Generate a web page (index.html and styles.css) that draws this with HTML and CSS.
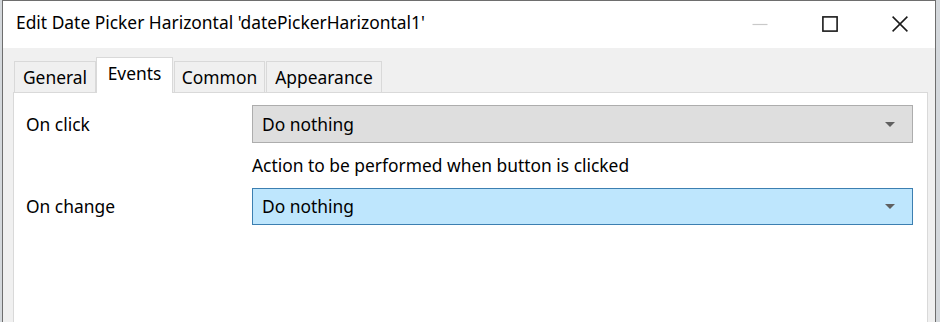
FILE: index.html
```html
<!DOCTYPE html>
<html>
<head>
<meta charset="utf-8">
<link rel="stylesheet" href="styles.css">
</head>
<body>
<div class="window">
  <div class="titlebar">
    <div class="title">Edit Date Picker Harizontal 'datePickerHarizontal1'</div>
    <div class="controls">
      <div class="ctl">
        <svg width="16" height="16" viewBox="0 0 16 16"><line x1="0.5" y1="8.5" x2="15.5" y2="8.5" stroke="#c9c9c9" stroke-width="1.2"/></svg>
      </div>
      <div class="ctl">
        <svg width="16" height="16" viewBox="0 0 16 16"><rect x="0.9" y="0.9" width="14.2" height="14.2" fill="none" stroke="#1a1a1a" stroke-width="1.6"/></svg>
      </div>
      <div class="ctl">
        <svg width="16" height="16" viewBox="0 0 16 16"><path d="M0.6 0.6 L15.4 15.4 M15.4 0.6 L0.6 15.4" stroke="#1a1a1a" stroke-width="1.5" fill="none"/></svg>
      </div>
    </div>
  </div>
  <div class="body">
    <div class="tabs">
      <div class="tab tab-general">General</div>
      <div class="tab tab-events active">Events</div>
      <div class="tab tab-common">Common</div>
      <div class="tab tab-appearance">Appearance</div>
    </div>
    <div class="panel">
      <div class="form">
        <div class="label">On click</div>
        <div class="combo">
          <span>Do nothing</span>
          <span class="arrow"></span>
        </div>
        <div></div>
        <div class="hint">Action to be performed when button is clicked</div>
        <div class="label">On change</div>
        <div class="combo focused">
          <span>Do nothing</span>
          <span class="arrow"></span>
        </div>
      </div>
    </div>
  </div>
</div>
</body>
</html>
```

FILE: styles.css
```css
html, body {
  margin: 0;
  padding: 0;
}
body {
  width: 940px;
  height: 322px;
  overflow: hidden;
  background: #d4d8dc;
  font-family: "Noto Sans", "Open Sans", sans-serif;
  color: #000;
}
.window {
  margin-left: 2px;
  width: 932px;
  height: 330px;
  border: 1px solid #6e6e6e;
  border-bottom: none;
  background: #f0f0f0;
  display: flex;
  flex-direction: column;
}
.titlebar {
  height: 47px;
  background: #fff;
  display: flex;
  align-items: center;
  justify-content: space-between;
}
.title {
  padding-left: 13px;
  font-size: 17.4px;
  padding-bottom: 5px;
}
.controls {
  display: flex;
  height: 100%;
}
.ctl {
  width: 70px;
  display: flex;
  align-items: center;
  justify-content: center;
  padding-bottom: 2px;
}
.body {
  flex: 1;
  padding: 9px 7px 0 10px;
  display: flex;
  flex-direction: column;
}
.tabs {
  display: flex;
  align-items: flex-end;
  height: 35px;
  padding-left: 1px;
  position: relative;
  z-index: 1;
}
.tab {
  height: 31px;
  box-sizing: border-box;
  border: 1px solid #d9d9d9;
  border-bottom: none;
  background: #f0f0f0;
  font-size: 17.4px;
  display: flex;
  align-items: center;
  justify-content: center;
  padding-bottom: 1px;
}
.tab-general { width: 82px; }
.tab-events { width: 77px; }
.tab-common { width: 91px; margin-left: 1px; }
.tab-appearance { width: 116px; margin-left: 1px; }
.tab.active {
  height: 36px;
  margin-bottom: -1px;
  background: #fff;
  border-color: #d9d9d9;
  padding-bottom: 5px;
}
.panel {
  flex: 1;
  background: #fff;
  border: 1px solid #d9d9d9;
  padding: 12px 14px 0 12px;
}
.form {
  display: grid;
  grid-template-columns: 226px 1fr;
  grid-template-rows: 38px 44px 38px;
  align-items: center;
  font-size: 17.4px;
}
.combo {
  height: 38px;
  box-sizing: border-box;
  border: 1px solid #adadad;
  background: #dedede;
  display: flex;
  align-items: center;
  justify-content: space-between;
  padding: 0 17px 1px 9px;
}
.combo.focused {
  height: 37px;
  background: #bee6fd;
  border-color: #3c7fb1;
}
.arrow {
  width: 0;
  height: 0;
  border-left: 5px solid transparent;
  border-right: 5px solid transparent;
  border-top: 5px solid #606060;
  margin-top: 2px;
}
```
